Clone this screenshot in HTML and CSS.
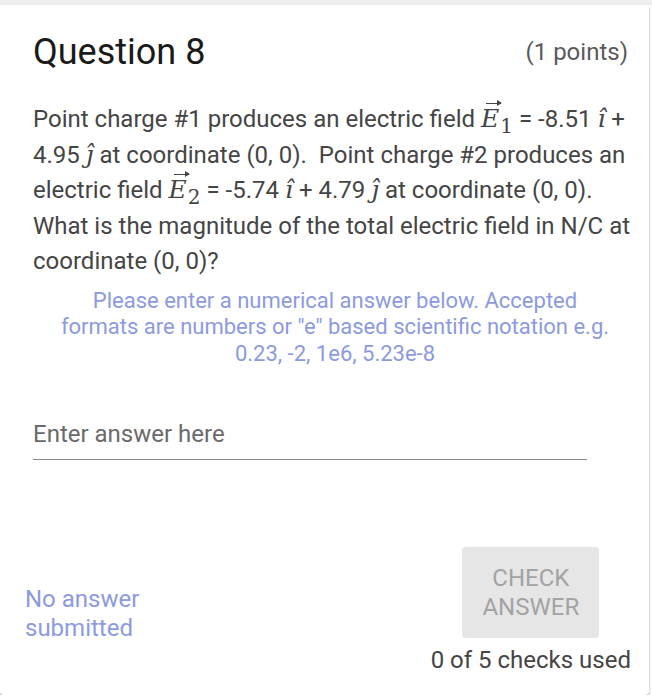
FILE: index.html
```html
<!DOCTYPE html>
<html lang="en">
<head>
    <meta charset="UTF-8">
    <meta name="viewport" content="width=device-width, initial-scale=1.0">
    <title>Question 8</title>
    <link rel="stylesheet" href="styles.css">
</head>
<body>
    <div class="top-strip"></div>
    <div class="card">
        <!-- Header -->
        <div class="question-header">
            <h1>Question 8</h1>
            <span class="points">(1 points)</span>
        </div>

        <!-- Question text -->
        <p class="question-text">
            Point charge #1 produces an electric field
            <span class="math"><span class="vec">E</span><span class="sub">1</span></span>
            = -8.51 <span class="math">î</span> +
            4.95 <span class="math">ĵ</span> at coordinate (0, 0).&nbsp; Point charge #2 produces an
            electric field
            <span class="math"><span class="vec">E</span><span class="sub">2</span></span>
            = -5.74 <span class="math">î</span> + 4.79 <span class="math">ĵ</span> at coordinate (0, 0).
            What is the magnitude of the total electric field in N/C at coordinate (0, 0)?
        </p>

        <p class="hint">
            Please enter a numerical answer below. Accepted<br>
            formats are numbers or "e" based scientific notation e.g.<br>
            0.23, -2, 1e6, 5.23e-8
        </p>

        <input type="text" class="answer-input" placeholder="Enter answer here">

        <!-- Footer -->
        <div class="footer">
            <div class="status">No answer submitted</div>
            <div class="check-box">
                <button class="check-btn" disabled>Check answer</button>
                <div class="checks-used">0 of 5 checks used</div>
            </div>
        </div>
    </div>
</body>
</html>
```

FILE: styles.css
```css
body {
    font-family: Roboto, "Noto Sans", sans-serif;
    margin: 0;
    padding: 0;
    background-color: #ffffff;
    color: #424242;
}
.top-strip {
    height: 5px;
    background-color: #efefef;
}
.card {
    width: 649px;
    box-sizing: border-box;
    padding: 26px 12px 20px 25px;
    background-color: #ffffff;
    border-radius: 0 0 4px 4px;
    box-shadow: 0 2px 3px rgba(0, 0, 0, 0.35);
}
.question-header {
    display: flex;
    justify-content: space-between;
    align-items: center;
    margin: 0 9px 0 8px;
}
h1 {
    margin: 0;
    font-size: 36px;
    line-height: 42px;
    font-weight: 400;
    color: #1a1a1a;
}
.points {
    font-size: 24px;
    line-height: 28px;
    color: #5a5a5a;
}
.question-text {
    margin: 29px 0 0 8px;
    font-size: 24px;
    line-height: 35.6px;
    color: #454545;
}
.math {
    font-family: "DejaVu Serif", "Liberation Serif", serif;
    font-style: italic;
    font-size: 25px;
    line-height: 1;
    white-space: nowrap;
}
.vec {
    position: relative;
    display: inline-block;
}
.vec::after {
    content: "";
    position: absolute;
    left: 5px;
    right: -2px;
    top: -3px;
    height: 1px;
    background-color: #454545;
}
.vec::before {
    content: "";
    position: absolute;
    right: -3px;
    top: -6px;
    border-left: 5px solid #454545;
    border-top: 3.5px solid transparent;
    border-bottom: 3.5px solid transparent;
}
.sub {
    font-style: normal;
    font-size: 20px;
    position: relative;
    top: 6px;
    margin-left: 1px;
}
.hint {
    margin: 8px 0 0 8px;
    font-size: 22px;
    line-height: 26.5px;
    text-align: center;
    color: #8c9ae0;
}
.answer-input {
    display: block;
    margin: 52px 0 0 8px;
    width: 554px;
    height: 41px;
    box-sizing: border-box;
    padding: 0 0 10px 0;
    border: none;
    border-bottom: 1px solid #8a8a8a;
    font-family: Roboto, sans-serif;
    font-size: 24px;
    color: #333;
    outline: none;
    background: transparent;
}
.answer-input::placeholder {
    color: #6a6a6a;
}
.footer {
    display: flex;
    justify-content: space-between;
    align-items: center;
    margin: 87px 6px 0 0;
}
.status {
    width: 140px;
    padding-top: 6px;
    font-size: 24px;
    line-height: 29px;
    color: #8c9ae0;
}
.check-box {
    display: flex;
    flex-direction: column;
    align-items: center;
    gap: 8px;
}
.check-btn {
    width: 137px;
    height: 91px;
    padding: 0 18px;
    border: none;
    border-radius: 4px;
    background-color: #e6e6e6;
    color: #a3a3a3;
    font-family: Roboto, sans-serif;
    font-size: 24px;
    line-height: 29px;
    text-transform: uppercase;
}
.checks-used {
    font-size: 24px;
    line-height: 29px;
    color: #454545;
}
```
